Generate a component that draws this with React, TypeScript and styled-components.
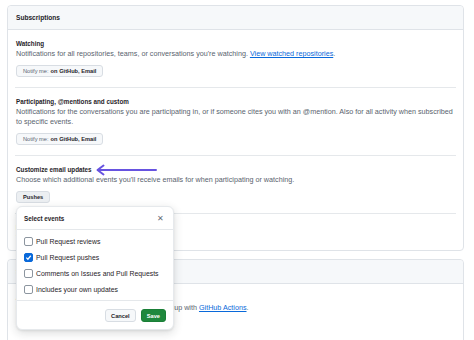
import React from "react";
import styled, { createGlobalStyle } from "styled-components";

const GlobalStyle = createGlobalStyle`
  body {
    margin: 0;
    background: #ffffff;
    font-family: "Liberation Sans", Arial, sans-serif;
    color: #1f2328;
  }
  * {
    box-sizing: border-box;
  }
`;

const Page = styled.div`
  width: 474px;
  height: 340px;
  overflow: hidden;
  padding: 5px 10px 0 7px;
  display: flex;
  flex-direction: column;
  gap: 8px;
`;

const Card = styled.div`
  flex-shrink: 0;
  border: 1px solid #dfe3e8;
  border-radius: 4px;
  background: #fff;
`;

const CardHeader = styled.div`
  height: 24px;
  background: #f6f8fa;
  border-bottom: 1px solid #dfe3e8;
  border-radius: 4px 4px 0 0;
  display: flex;
  align-items: center;
  padding-left: 8px;
  font-size: 6.6px;
  font-weight: 700;
`;

const CardBody = styled.div`
  padding: 0 7px;
`;

const Section = styled.div<{ $last?: boolean; $tall?: boolean }>`
  padding: 8px 1px ${(p) => (p.$tall ? "40px" : p.$last ? "7px" : "10px")};
  border-bottom: ${(p) => (p.$last ? "none" : "1px solid #e5e8eb")};
`;

const TitleRow = styled.div`
  display: flex;
  align-items: center;
  gap: 4px;
  height: 11px;
`;

const Title = styled.div`
  font-size: 6.3px;
  font-weight: 700;
  color: #1f2328;
`;

const Desc = styled.div`
  font-size: 7.2px;
  line-height: 10px;
  color: #59636e;
`;

const Link = styled.a`
  color: #0969da;
  text-decoration: underline;
`;

const Pill = styled.div<{ $active?: boolean }>`
  display: inline-flex;
  align-items: center;
  height: 12px;
  margin-top: 5px;
  padding: 0 6px;
  border: 1px solid #d8dde3;
  border-radius: 3px;
  background: ${(p) => (p.$active ? "#eceff2" : "#f6f8fa")};
  font-size: 5.7px;
  font-weight: 700;
  color: #1f2328;
`;

const Muted = styled.span`
  font-weight: 400;
  color: #59636e;
  margin-right: 2px;
`;

const Anchor = styled.div`
  position: relative;
  display: inline-block;
`;

const Popover = styled.div`
  position: absolute;
  top: calc(100% + 3px);
  left: 0;
  z-index: 10;
  width: 158px;
  background: #fff;
  border: 1px solid #e6e9ec;
  border-radius: 6px;
  box-shadow: 0 3px 10px rgba(31, 35, 40, 0.16), 0 1px 2px rgba(31, 35, 40, 0.08);
`;

const PopHeader = styled.div`
  height: 23px;
  display: flex;
  align-items: center;
  justify-content: space-between;
  padding: 0 9px 0 7px;
  border-bottom: 1px solid #e5e8eb;
  font-size: 6.3px;
  font-weight: 700;
`;

const Close = styled.span`
  font-size: 7.5px;
  font-weight: 400;
  color: #656d76;
`;

const OptionList = styled.div`
  display: flex;
  flex-direction: column;
  gap: 6px;
  padding: 6px 7px 6px;
  border-bottom: 1px solid #e5e8eb;
`;

const Option = styled.label`
  display: flex;
  align-items: center;
  gap: 3px;
  height: 10px;
  font-size: 6.9px;
  color: #1f2328;
`;

const Box = styled.span<{ $checked?: boolean }>`
  width: 9px;
  height: 9px;
  border-radius: 2px;
  border: 1px solid ${(p) => (p.$checked ? "#0969da" : "#8c959f")};
  background: ${(p) => (p.$checked ? "#0969da" : "#fff")};
  display: flex;
  align-items: center;
  justify-content: center;
`;

const PopFooter = styled.div`
  display: flex;
  justify-content: flex-end;
  gap: 5px;
  padding: 8px 7px 7px;
`;

const Btn = styled.button<{ $primary?: boolean }>`
  height: 13px;
  padding: 0 5px;
  border-radius: 3px;
  border: 1px solid ${(p) => (p.$primary ? "#1a7f37" : "#d8dde3")};
  background: ${(p) => (p.$primary ? "#1f883d" : "#f6f8fa")};
  color: ${(p) => (p.$primary ? "#fff" : "#1f2328")};
  font-family: inherit;
  font-size: 5.7px;
  font-weight: 700;
`;

const options = [
  { label: "Pull Request reviews", checked: false },
  { label: "Pull Request pushes", checked: true },
  { label: "Comments on Issues and Pull Requests", checked: false },
  { label: "Includes your own updates", checked: false },
];

const Arrow = () => (
  <svg width="61" height="12" viewBox="0 0 61 12">
    <path
      d="M60 6 H2 M7.5 1.5 L1.5 6 L7.5 10.5"
      fill="none"
      stroke="#6753e0"
      strokeWidth="2"
      strokeLinecap="round"
      strokeLinejoin="round"
    />
  </svg>
);

const Check = () => (
  <svg width="7" height="7" viewBox="0 0 8 8">
    <path d="M1.5 4.2 L3.3 6 L6.6 2" fill="none" stroke="#fff" strokeWidth="1.4" />
  </svg>
);

export default function App() {
  return (
    <>
      <GlobalStyle />
      <Page>
        <Card>
          <CardHeader>Subscriptions</CardHeader>
          <CardBody>
            <Section>
              <TitleRow>
                <Title>Watching</Title>
              </TitleRow>
              <Desc>
                Notifications for all repositories, teams, or conversations you're watching.{" "}
                <Link>View watched repositories</Link>.
              </Desc>
              <Pill>
                <Muted>Notify me:</Muted> on GitHub, Email
              </Pill>
            </Section>
            <Section>
              <TitleRow>
                <Title>Participating, @mentions and custom</Title>
              </TitleRow>
              <Desc>
                Notifications for the conversations you are participating in, or if someone cites you with an
                @mention. Also for all activity when subscribed to specific events.
              </Desc>
              <Pill>
                <Muted>Notify me:</Muted> on GitHub, Email
              </Pill>
            </Section>
            <Section>
              <TitleRow>
                <Title>Customize email updates</Title>
                <Arrow />
              </TitleRow>
              <Desc>Choose which additional events you'll receive emails for when participating or watching.</Desc>
              <Anchor>
                <Pill $active>Pushes</Pill>
                <Popover>
                  <PopHeader>
                    Select events
                    <Close>✕</Close>
                  </PopHeader>
                  <OptionList>
                    {options.map((o) => (
                      <Option key={o.label}>
                        <Box $checked={o.checked}>{o.checked && <Check />}</Box>
                        {o.label}
                      </Option>
                    ))}
                  </OptionList>
                  <PopFooter>
                    <Btn>Cancel</Btn>
                    <Btn $primary>Save</Btn>
                  </PopFooter>
                </Popover>
              </Anchor>
            </Section>
            <Section $last>
              <TitleRow>
                <Title>Ignored repositories</Title>
              </TitleRow>
              <Desc>You'll never be notified.</Desc>
            </Section>
          </CardBody>
        </Card>
        <Card>
          <CardHeader>System</CardHeader>
          <CardBody>
            <Section $last $tall>
              <TitleRow>
                <Title>Actions</Title>
              </TitleRow>
              <Desc>
                Notifications for workflow runs on repositories set up with <Link>GitHub Actions</Link>.
              </Desc>
            </Section>
          </CardBody>
        </Card>
      </Page>
    </>
  );
}
